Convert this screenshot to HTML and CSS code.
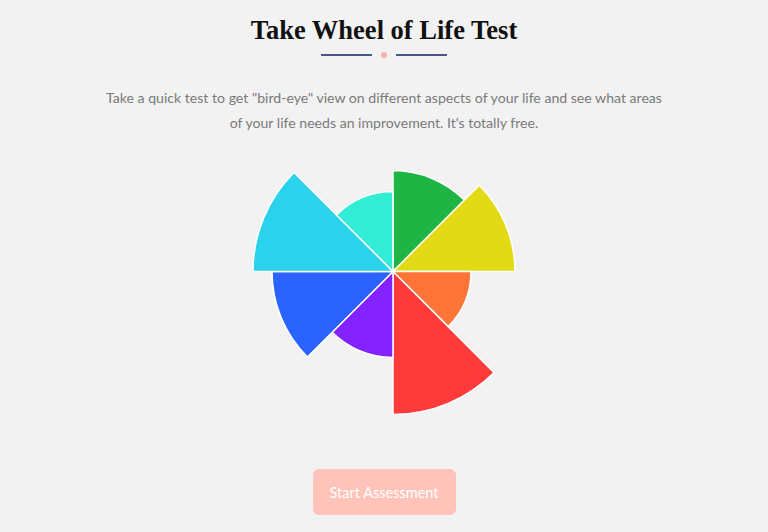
FILE: index.html
```html
<!DOCTYPE html>
<html>
<head>
<meta charset="utf-8">
<link rel="stylesheet" href="styles.css">
</head>
<body>
<main class="page">
  <h1 class="title">Take Wheel of Life Test</h1>
  <div class="divider"><span class="line"></span><span class="dot"></span><span class="line"></span></div>
  <p class="intro">Take a quick test to get "bird-eye" view on different aspects of your life and see what areas<br>of your life needs an improvement. It's totally free.</p>
  <svg class="wheel" width="300" height="300" viewBox="0 0 300 300">
    <g transform="translate(159 136.5)" stroke="#ffffff" stroke-width="1.5" stroke-linejoin="round">
      <path fill="#1fb545" d="M0 0 L0 -101 A101 101 0 0 1 71.42 -71.42 Z"/>
      <path fill="#e2da15" d="M0 0 L86.27 -86.27 A122 122 0 0 1 122 0 Z"/>
      <path fill="#ff7437" d="M0 0 L78 0 A78 78 0 0 1 55.15 55.15 Z"/>
      <path fill="#ff3a3a" d="M0 0 L101.12 101.12 A143 143 0 0 1 0 143 Z"/>
      <path fill="#8422ff" d="M0 0 L0 86 A86 86 0 0 1 -60.81 60.81 Z"/>
      <path fill="#2a63ff" d="M0 0 L-85.56 85.56 A121 121 0 0 1 -121 0 Z"/>
      <path fill="#2ad2ec" d="M0 0 L-140 0 A140 140 0 0 1 -98.99 -98.99 Z"/>
      <path fill="#33ecd6" d="M0 0 L-56.57 -56.57 A80 80 0 0 1 0 -80 Z"/>
    </g>
  </svg>
  <button class="start">Start Assessment</button>
</main>
</body>
</html>
```
FILE: styles.css
```css
html, body {
  margin: 0;
  padding: 0;
  background: #f2f2f2;
}
.page {
  display: flex;
  flex-direction: column;
  align-items: center;
  height: 532px;
}
.title {
  margin: 14px 0 0;
  font-family: "Liberation Serif", serif;
  font-weight: bold;
  font-size: 26.5px;
  line-height: 32px;
  color: #111;
}
.divider {
  display: flex;
  align-items: center;
  gap: 9px;
  margin-top: 6px;
  height: 6px;
}
.line {
  width: 51px;
  height: 2px;
  background: #4a5685;
}
.dot {
  width: 6px;
  height: 6px;
  border-radius: 50%;
  background: #f7b3a9;
}
.intro {
  margin: 27px 0 0;
  font-family: "Lato", sans-serif;
  font-size: 14.1px;
  line-height: 25px;
  color: #7a7a7a;
  text-align: center;
}
.wheel {
  display: block;
  margin-top: 0;
}
.start {
  margin-top: 34px;
  width: 143px;
  height: 46px;
  border: none;
  border-radius: 6px;
  background: #ffc3b9;
  color: #ffffff;
  font-family: "Lato", sans-serif;
  font-size: 14.5px;
}
```
